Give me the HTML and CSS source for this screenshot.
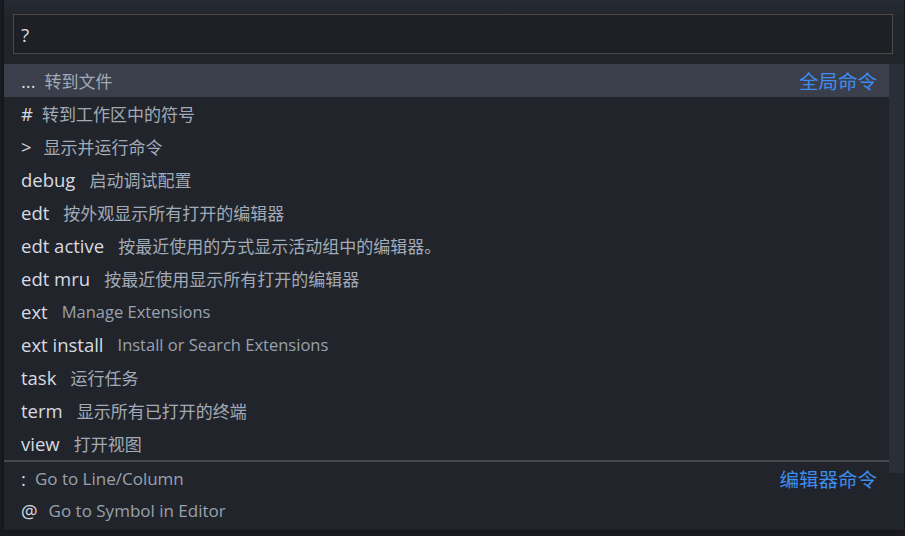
FILE: index.html
```html
<!DOCTYPE html>
<html lang="zh">
<head>
<meta charset="utf-8">
<link rel="stylesheet" href="styles.css">
</head>
<body>
<div class="editor">
  <div class="quick">
    <div class="input-wrap"><div class="input">?</div></div>
    <div class="list">
      <div class="rows">
        <div class="row active"><span class="label">...</span><span class="desc tight">转到文件</span><span class="group">全局命令</span></div>
        <div class="row"><span class="label">#</span><span class="desc tight">转到工作区中的符号</span></div>
        <div class="row"><span class="label">&gt;</span><span class="desc tight wide">显示并运行命令</span></div>
        <div class="row"><span class="label">debug</span><span class="desc">启动调试配置</span></div>
        <div class="row"><span class="label">edt</span><span class="desc">按外观显示所有打开的编辑器</span></div>
        <div class="row"><span class="label">edt active</span><span class="desc">按最近使用的方式显示活动组中的编辑器。</span></div>
        <div class="row"><span class="label">edt mru</span><span class="desc">按最近使用显示所有打开的编辑器</span></div>
        <div class="row"><span class="label">ext</span><span class="desc latin">Manage Extensions</span></div>
        <div class="row"><span class="label">ext install</span><span class="desc latin">Install or Search Extensions</span></div>
        <div class="row"><span class="label">task</span><span class="desc">运行任务</span></div>
        <div class="row"><span class="label">term</span><span class="desc">显示所有已打开的终端</span></div>
        <div class="row"><span class="label">view</span><span class="desc">打开视图</span></div>
        <div class="row sep short"><span class="label">:</span><span class="desc latin go colon">Go to Line/Column</span><span class="group">编辑器命令</span></div>
      </div>
      <div class="scroll"></div>
    </div>
    <div class="row short last"><span class="label">@</span><span class="desc latin go">Go to Symbol in Editor</span></div>
  </div>
</div>
</body>
</html>
```
FILE: styles.css
```css
html, body {
  margin: 0;
  padding: 0;
  background: #1b1d23;
  width: 905px;
  height: 536px;
  overflow: hidden;
  font-family: "Open Sans", "Noto Sans CJK SC", sans-serif;
}
.editor {
  height: 536px;
  padding-left: 4px;
  padding-right: 1px;
  box-sizing: border-box;
}
.quick {
  background: #21252b;
  height: 530px;
  display: flex;
  flex-direction: column;
  box-shadow: 0 0 6px rgba(0,0,0,0.5);
}
.input-wrap {
  padding: 14px 11px 10px 9px;
  background: linear-gradient(#262a32, #21252b 20px);
}
.input {
  height: 38px;
  border: 1px solid #4c4a47;
  background: #1e2025;
  color: #d7dae0;
  font-size: 19px;
  line-height: 40px;
  padding-left: 7px;
}
.list {
  position: relative;
}
.rows {
  margin-right: 15px;
}
.scroll {
  position: absolute;
  top: 0;
  right: 0;
  width: 15px;
  height: 409px;
  background: #2a2e36;
}
.row {
  height: 33px;
  display: flex;
  align-items: center;
  padding-left: 17px;
  padding-right: 12px;
  white-space: nowrap;
}
.row.active {
  background: #3a3f4b;
  margin-right: -15px;
  padding-right: 27px;
}
.row.sep {
  border-top: 2px solid #45484e;
  height: 31px;
}
.row.short { height: 32px; }
.row.last { padding-right: 27px; }
.label {
  color: #d7dae0;
  font-size: 18.5px;
}
.desc {
  color: #a3aab7;
  font-size: 17px;
  margin-left: 14px;
}
.desc.tight { margin-left: 9px; }
.desc.wide { margin-left: 12px; }
.desc.latin { font-size: 16.5px; color: #9aa1ad; }
.desc.go { font-size: 17px; margin-left: 11px; }
.desc.colon { margin-left: 9px; }
.group {
  margin-left: auto;
  color: #3f8cf0;
  font-size: 19.5px;
}
```
